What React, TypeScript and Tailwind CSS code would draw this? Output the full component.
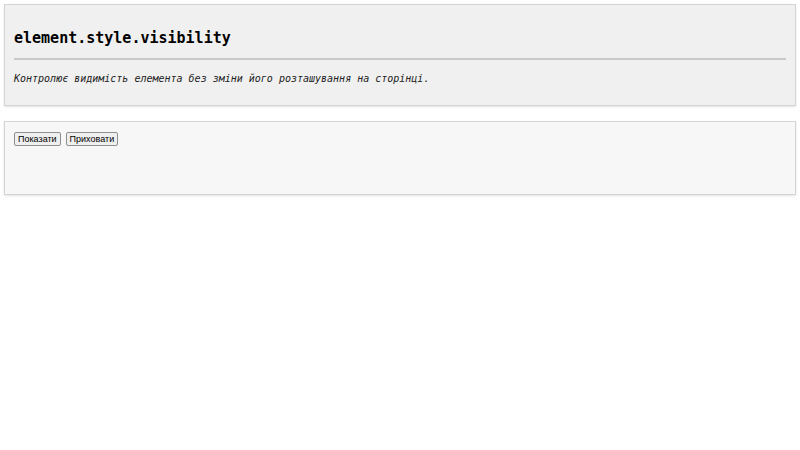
import React, { useState } from 'react';

export default function App() {
  const [visible, setVisible] = useState(false);

  return (
    <div className="min-h-[450px] w-[800px] bg-white pt-[4px]" style={{ fontFamily: '"DejaVu Sans Mono", monospace' }}>
      <div className="mx-[4px] border border-[#d4d4d4] bg-[#f0f0f0] px-[9px] pt-[9px] pb-[9px] shadow-[0_1px_2px_rgba(0,0,0,0.12)]">
        <h2 className="mt-[14px] mb-[10px] text-[15px] font-bold leading-[20px] text-black">element.style.visibility</h2>
        <hr className="border-0 border-t-2 border-[#c8c8c8]" />
        <p className="mt-[12px] mb-[10px] text-[10px] italic leading-[14px] text-[#222]">
          Контролює видимість елемента без зміни його розташування на сторінці.
        </p>
      </div>

      <div className="mx-[4px] mt-[15px] border border-[#d4d4d4] bg-[#f7f7f7] px-[9px] pt-[10px] pb-[9px] shadow-[0_1px_2px_rgba(0,0,0,0.12)]">
        <div className="flex gap-[5px]" style={{ fontFamily: '"Liberation Sans", Arial, sans-serif' }}>
          <button
            onClick={() => setVisible(true)}
            className="h-[14px] rounded-[2px] border border-[#8f8f8f] bg-[#efefef] px-[3px] text-[9px] leading-[12px] text-black"
          >
            Показати
          </button>
          <button
            onClick={() => setVisible(false)}
            className="h-[14px] rounded-[2px] border border-[#8f8f8f] bg-[#efefef] px-[3px] text-[9px] leading-[12px] text-black"
          >
            Приховати
          </button>
        </div>
        <div className={`mt-[8px] h-[31px] ${visible ? 'visible' : 'invisible'} bg-[#4a90d9] w-[120px] text-[10px] text-white flex items-center justify-center`}>
          Елемент
        </div>
      </div>
    </div>
  );
}
